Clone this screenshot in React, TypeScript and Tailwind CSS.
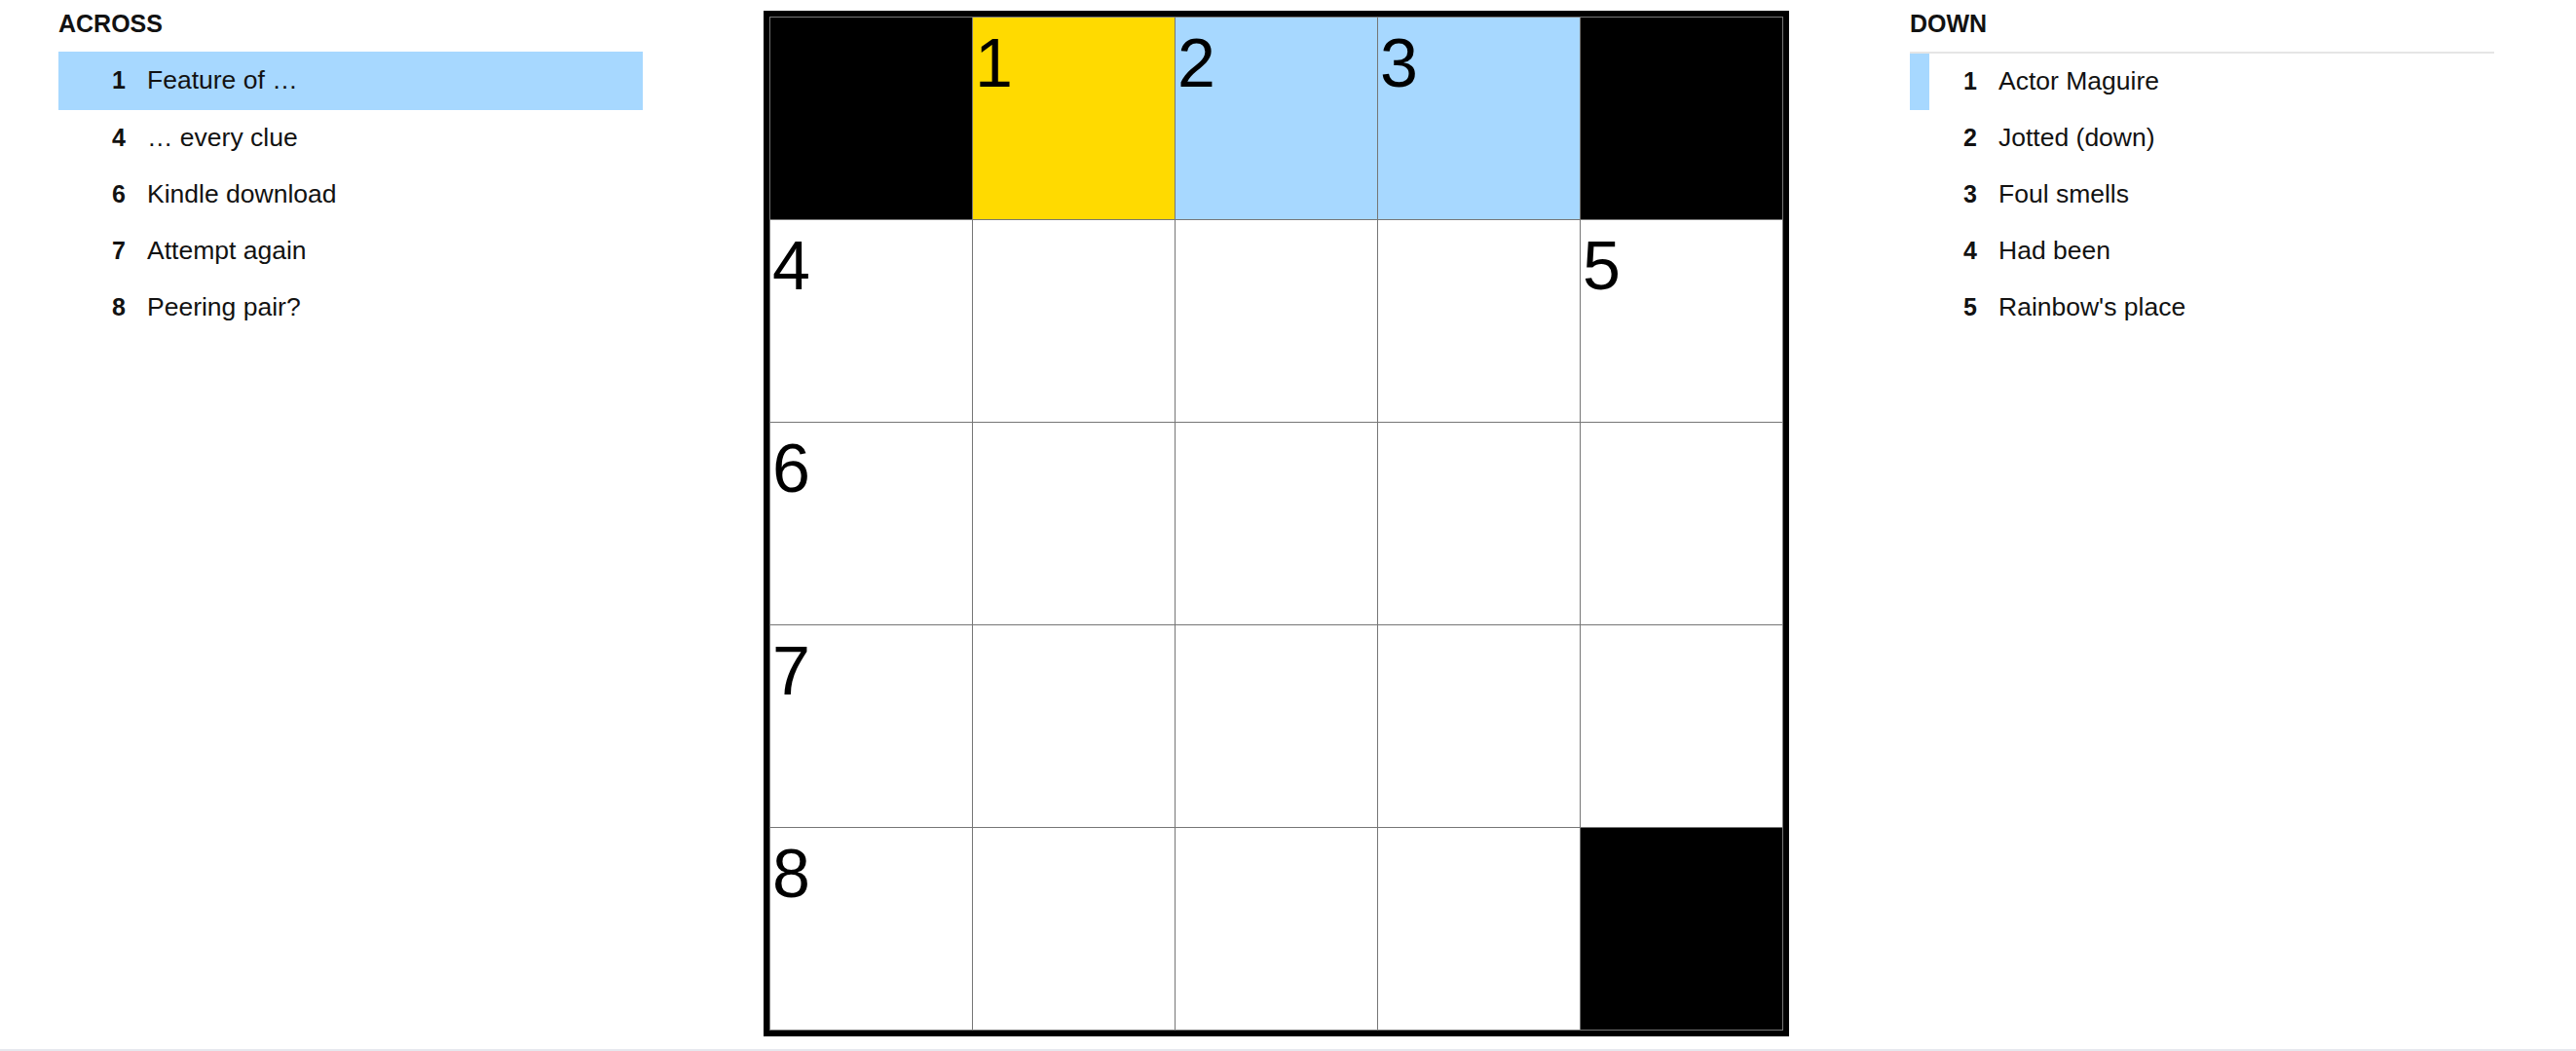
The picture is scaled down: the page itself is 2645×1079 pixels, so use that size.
import React from 'react';

type Clue = { num: number; text: string };

const across: Clue[] = [
  { num: 1, text: 'Feature of …' },
  { num: 4, text: '… every clue' },
  { num: 6, text: 'Kindle download' },
  { num: 7, text: 'Attempt again' },
  { num: 8, text: 'Peering pair?' },
];

const down: Clue[] = [
  { num: 1, text: 'Actor Maguire' },
  { num: 2, text: 'Jotted (down)' },
  { num: 3, text: 'Foul smells' },
  { num: 4, text: 'Had been' },
  { num: 5, text: "Rainbow's place" },
];

// '#' = block, otherwise the clue number (0 = none)
const board: (number | '#')[][] = [
  ['#', 1, 2, 3, '#'],
  [4, 0, 0, 0, 5],
  [6, 0, 0, 0, 0],
  [7, 0, 0, 0, 0],
  [8, 0, 0, 0, '#'],
];

const active = { row: 0, col: 1 };
const activeWord = [1, 2, 3];

const ClueList = ({
  title,
  clues,
  mode,
}: {
  title: string;
  clues: Clue[];
  mode: 'full' | 'bar';
}) => (
  <section className="w-[600px] shrink-0 pt-[10px]">
    <h3 className="mb-[14px] text-[25px] font-bold leading-[29px] text-[#121212]">{title}</h3>
    <ol className="border-t-2 border-[#e5e5e5]">
      {clues.map((c, i) => {
        const selected = i === 0;
        let rowClass = 'h-[58px] pl-[55px]';
        if (selected && mode === 'full') rowClass = '-mt-[2px] h-[60px] pl-[55px] bg-[#a7d8ff]';
        if (selected && mode === 'bar') rowClass = 'h-[58px] pl-[35px] border-l-[20px] border-[#a7d8ff]';
        return (
          <li key={c.num} className={`flex items-center text-[26.5px] text-[#121212] ${rowClass}`}>
            <span className="w-[36px] shrink-0 text-[25px] font-bold">{c.num}</span>
            <span>{c.text}</span>
          </li>
        );
      })}
    </ol>
  </section>
);

const Cell = ({ value, row, col }: { value: number | '#'; row: number; col: number }) => {
  let bg = 'bg-white';
  if (value === '#') bg = 'bg-black';
  else if (row === active.row && col === active.col) bg = 'bg-[#ffda00]';
  else if (row === active.row && activeWord.includes(col)) bg = 'bg-[#a7d8ff]';

  return (
    <div className={`${bg} pl-[2px] pt-[12px]`}>
      {value !== '#' && value !== 0 && (
        <span className="block text-[70px] leading-none text-black">{value}</span>
      )}
    </div>
  );
};

export default function App() {
  return (
    <div
      className="h-[1079px] w-full overflow-hidden border-b-2 border-[#e6e8ee] bg-white"
      style={{ fontFamily: '"Liberation Sans", Arial, sans-serif' }}
    >
      <div className="flex pl-[60px]">
        <ClueList title="ACROSS" clues={across} mode="full" />

        <div className="ml-[124px] shrink-0 pt-[11px]">
          <div className="border-[6px] border-black">
            <div className="grid h-[1041px] w-[1041px] grid-cols-[repeat(5,207px)] grid-rows-[repeat(5,207px)] gap-px bg-[#767676] p-px">
              {board.map((r, ri) =>
                r.map((v, ci) => <Cell key={`${ri}-${ci}`} value={v} row={ri} col={ci} />)
              )}
            </div>
          </div>
        </div>

        <div className="ml-[124px]">
          <ClueList title="DOWN" clues={down} mode="bar" />
        </div>
      </div>
    </div>
  );
}
